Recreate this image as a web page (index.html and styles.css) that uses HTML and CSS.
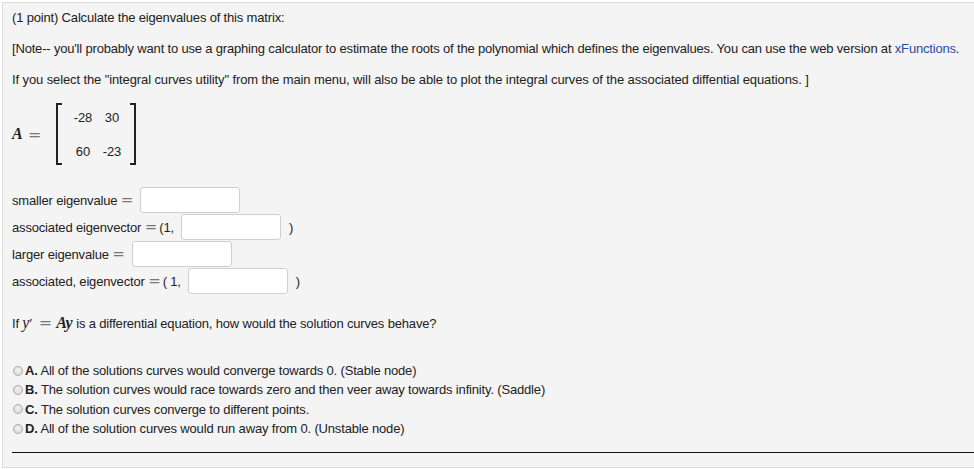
FILE: index.html
```html
<!DOCTYPE html>
<html>
<head>
<meta charset="utf-8">
<link rel="stylesheet" href="styles.css">
</head>
<body>
<div class="problem">
  <p>(1 point) Calculate the eigenvalues of this matrix:</p>
  <p class="note">[Note-- you'll probably want to use a graphing calculator to estimate the roots of the polynomial which defines the eigenvalues. You can use the web version at <a class="link" href="#">xFunctions</a>.</p>
  <p class="select">If you select the "integral curves utility" from the main menu, will also be able to plot the integral curves of the associated diffential equations. ]</p>

  <div class="matrix-row">
    <span class="math-a">A</span><span class="math-eq">=</span>
    <div class="matrix">
      <span class="bracket bracket-left"></span>
      <div class="cells">
        <span>-28</span><span>30</span>
        <span>60</span><span>-23</span>
      </div>
      <span class="bracket bracket-right"></span>
    </div>
  </div>

  <div class="answers">
    <div class="answer">smaller eigenvalue <span class="math-eq small">=</span><span class="box"></span></div>
    <div class="answer">associated eigenvector <span class="math-eq small">=</span>(1,<span class="box box-b"></span><span class="close">)</span></div>
    <div class="answer">larger eigenvalue <span class="math-eq small">=</span><span class="box"></span></div>
    <div class="answer">associated, eigenvector <span class="math-eq small">=</span>( 1,<span class="box box-b"></span><span class="close">)</span></div>
  </div>

  <p class="question">If <span class="math-i">y</span><span class="prime">′</span><span class="math-eq q">=</span><span class="math-i bold">Ay</span> is a differential equation, how would the solution curves behave?</p>

  <ul class="choices">
    <li><span class="radio"></span><b>A.</b> All of the solutions curves would converge towards 0. (Stable node)</li>
    <li><span class="radio"></span><b>B.</b> The solution curves would race towards zero and then veer away towards infinity. (Saddle)</li>
    <li><span class="radio"></span><b>C.</b> The solution curves converge to different points.</li>
    <li><span class="radio"></span><b>D.</b> All of the solution curves would run away from 0. (Unstable node)</li>
  </ul>
  <div class="rule"></div>
</div>
</body>
</html>
```

FILE: styles.css
```css
html, body {
  margin: 0;
  padding: 0;
  background: #ffffff;
  overflow: hidden;
}

body {
  font-family: "Liberation Sans", Arial, sans-serif;
  font-size: 13px;
  letter-spacing: -0.17px;
  color: #222;
}

.problem {
  margin: 2px -20px 0 2px;
  border: 1px solid #dcdcdc;
  background: #f4f4f4;
  padding: 6px 0 13px 9px;
}

.problem p {
  margin: 0 0 13px;
  line-height: 18px;
}

.problem p.note {
  letter-spacing: -0.18px;
}

.problem p.select {
  letter-spacing: -0.11px;
}

.link {
  color: #2b4c9c;
  text-decoration: none;
}

.matrix-row {
  display: flex;
  align-items: center;
  margin-top: 14px;
  height: 62px;
}

.math-a {
  font-family: "Liberation Serif", "DejaVu Serif", serif;
  font-style: italic;
  font-weight: bold;
  font-size: 16px;
  width: 15px;
  letter-spacing: 0;
}

.math-eq {
  font-family: "DejaVu Sans", sans-serif;
  font-size: 16px;
  color: #777;
  margin-left: 1px;
  letter-spacing: 0;
}

.math-eq.small {
  font-size: 15px;
  margin: 0 2px 0 0;
}

.math-eq.q {
  font-size: 16px;
  margin: 0 4px 0 7px;
}

.matrix {
  display: flex;
  align-items: stretch;
  height: 62px;
  margin-left: 15px;
}

.bracket {
  width: 4px;
  border-top: 2px solid #222;
  border-bottom: 2px solid #222;
}

.bracket-left {
  border-left: 2px solid #222;
}

.bracket-right {
  border-right: 2px solid #222;
}

.cells {
  display: grid;
  grid-template-columns: 35px 23px;
  grid-template-rows: 18px 18px;
  row-gap: 16px;
  align-content: start;
  align-items: center;
  justify-items: center;
  padding: 6px 7px 0 3px;
  font-size: 13px;
  line-height: 18px;
}

.answers {
  margin-top: 22px;
}

.answer {
  display: flex;
  align-items: center;
  height: 26px;
  margin-bottom: 1px;
  white-space: pre;
}

.box {
  display: inline-block;
  width: 98px;
  height: 24px;
  background: #fff;
  border: 1px solid #cfcfcf;
  border-radius: 3px;
  margin-left: 5px;
}

.box-b {
  margin-left: 7px;
}

.close {
  margin-left: 8px;
}

.question {
  margin-top: 20px !important;
}

.math-i {
  font-family: "Liberation Serif", "DejaVu Serif", serif;
  font-style: italic;
  font-size: 16px;
  letter-spacing: 0;
}

.math-i.bold {
  font-weight: bold;
}

.prime {
  font-size: 13px;
}

.choices {
  list-style: none;
  margin: 28px 0 0;
  padding: 0;
}

.choices li {
  line-height: 19.3px;
  display: flex;
  align-items: center;
  white-space: pre;
}

.radio {
  display: inline-block;
  width: 8px;
  height: 8px;
  border-radius: 50%;
  border: 1px solid #a9a9a9;
  background: radial-gradient(circle at 50% 40%, #f2f2f2, #d6d6d6);
  margin: 0 2px 0 1px;
}

.rule {
  margin-top: 14px;
  height: 1px;
  border-top: 1px solid #111;
}
```
